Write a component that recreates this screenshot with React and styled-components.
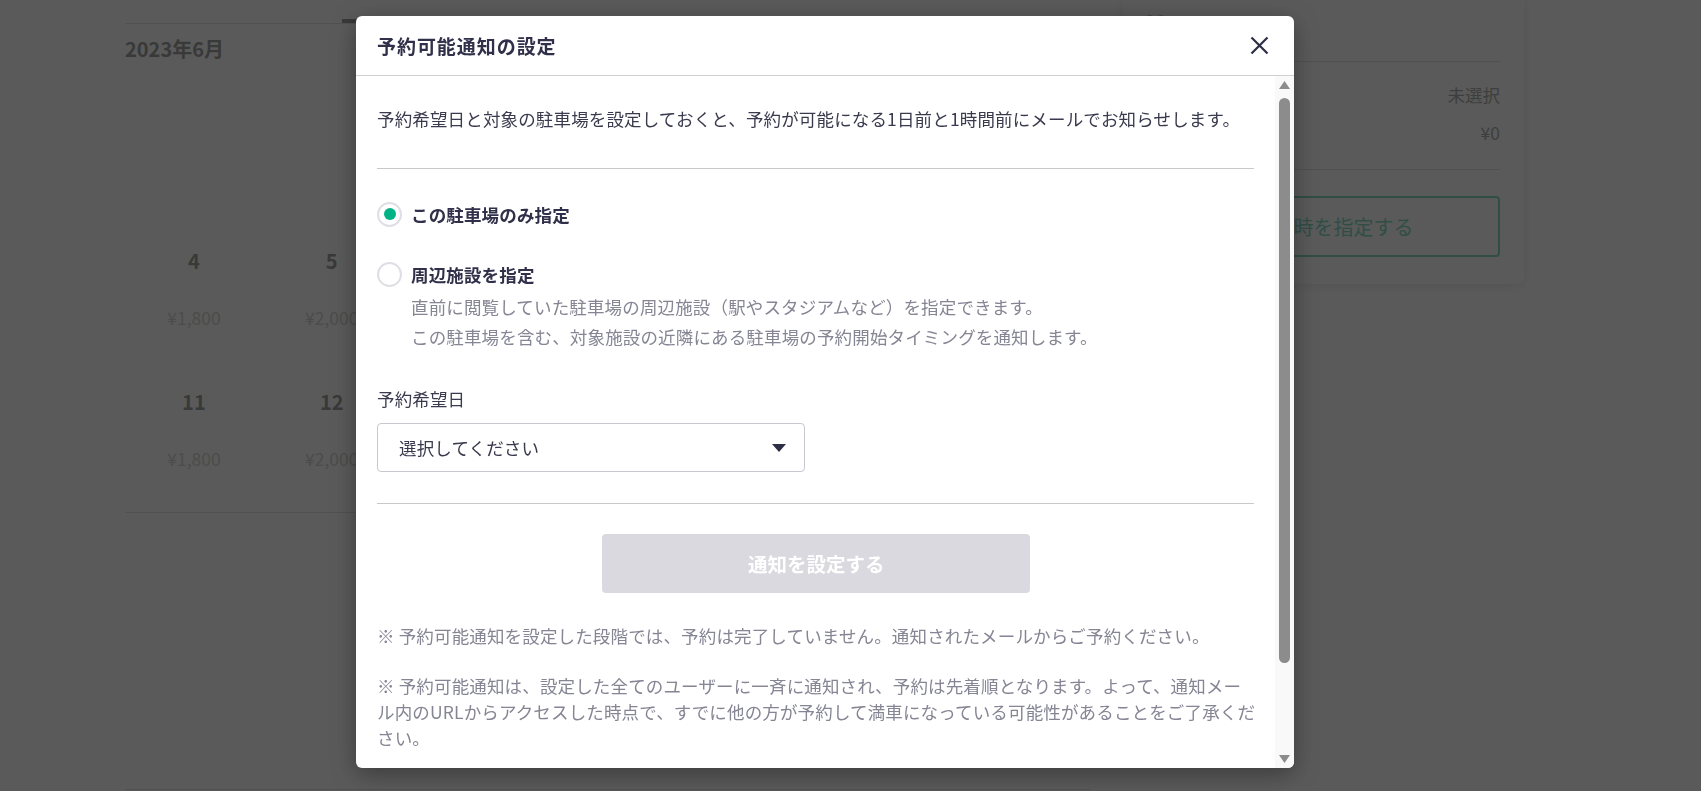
import React from "react";
import styled, { createGlobalStyle } from "styled-components";

const GlobalStyle = createGlobalStyle`
  html, body {
    margin: 0;
    padding: 0;
  }
  body {
    width: 1701px;
    height: 791px;
    overflow: hidden;
    background: #fff;
    font-family: "Noto Sans CJK JP", "Noto Sans", sans-serif;
    color: #333;
  }
  * { box-sizing: border-box; }
`;

/* ---------- page behind the overlay ---------- */

const Page = styled.div`
  width: 1701px;
  height: 791px;
  overflow: hidden;
  display: flex;
  align-items: flex-start;
  gap: 33px;
  padding-left: 125px;
`;

const CalendarCol = styled.section`
  width: 965px;
  flex: none;
`;

const TabBar = styled.div`
  height: 24px;
  display: flex;
  align-items: flex-end;
  border-bottom: 1px solid #c4c4c4;
`;

const ActiveTab = styled.div`
  margin-left: 217px;
  width: 260px;
  height: 4px;
  background: #333;
`;

const Month = styled.h2`
  margin: 10px 0 0;
  font-size: 20px;
  line-height: 30px;
  font-weight: 700;
  color: #333;
`;

const Grid = styled.div`
  margin-top: 29px;
  display: grid;
  grid-template-columns: repeat(7, 1fr);
  border-bottom: 1px solid #c4c4c4;
`;

const Cell = styled.div`
  height: ${(p) => (p.$tall ? 141 : 139)}px;
  padding-top: ${(p) => (p.$tall ? 16 : 14)}px;
  display: flex;
  flex-direction: column;
  align-items: center;
`;

const DayNum = styled.div`
  font-size: 20px;
  font-weight: 700;
  line-height: 30px;
  color: #333;
`;

const DayPrice = styled.div`
  margin-top: 29px;
  font-size: 17.5px;
  line-height: 26px;
  color: #a8a8a8;
`;

const NextSection = styled.div`
  height: 277px;
  border-bottom: 1px solid #c4c4c4;
`;

const SideCard = styled.aside`
  width: 401px;
  flex: none;
  background: #fff;
  padding: 0 24px 27px;
  border-radius: 0 0 8px 8px;
  box-shadow: 0 2px 12px rgba(0, 0, 0, 0.18);
`;

const BigPrice = styled.div`
  padding: 4px 0 17px;
  font-size: 28px;
  line-height: 40px;
  font-weight: 700;
  border-bottom: 1px solid #c4c4c4;
`;

const SummaryList = styled.div`
  padding: 20px 0 23px;
  display: flex;
  flex-direction: column;
  gap: 12px;
  border-bottom: 1px solid #c4c4c4;
`;

const SummaryRow = styled.div`
  display: flex;
  justify-content: flex-end;
  font-size: 17.5px;
  line-height: 26px;
  color: #555;
`;

const OutlineButton = styled.button`
  margin-top: 26px;
  width: 100%;
  height: 61px;
  border: 2px solid #00b386;
  border-radius: 4px;
  background: #fff;
  color: #00b386;
  font-family: inherit;
  font-size: 20px;
`;

/* ---------- modal ---------- */

const Overlay = styled.div`
  position: fixed;
  inset: 0;
  background: rgba(57, 58, 57, 0.84);
  padding: 16px 0 0 356px;
  display: flex;
  align-items: flex-start;
`;

const Modal = styled.div`
  width: 938px;
  height: 752px;
  background: #fff;
  border-radius: 6px;
  overflow: hidden;
  display: flex;
  flex-direction: column;
  box-shadow: 0 6px 24px rgba(0, 0, 0, 0.35);
`;

const Header = styled.header`
  height: 60px;
  flex: none;
  padding: 0 25px 0 21px;
  display: flex;
  align-items: center;
  justify-content: space-between;
  border-bottom: 1px solid #cfcfd4;
`;

const Title = styled.h1`
  margin: 0;
  font-size: 19px;
  letter-spacing: 0.05em;
  font-weight: 700;
  color: #30304a;
`;

const CloseButton = styled.button`
  width: 19px;
  height: 19px;
  padding: 0;
  border: none;
  background: none;
  display: flex;
  cursor: pointer;
`;

const Body = styled.div`
  flex: 1;
  min-height: 0;
  display: flex;
`;

const Content = styled.div`
  flex: 1;
  min-width: 0;
  overflow: hidden;
  padding: 28px 19.5px 0 21px;
  letter-spacing: 0.15px;
`;

const ScrollBar = styled.div`
  width: 19px;
  flex: none;
  background: #f9f9f9;
  display: flex;
  flex-direction: column;
`;

const ScrollArrow = styled.div`
  height: 18px;
  flex: none;
  display: flex;
  align-items: center;
  justify-content: center;
`;

const ScrollTrack = styled.div`
  flex: 1;
  padding: 4px;
`;

const ScrollThumb = styled.div`
  height: 565px;
  border-radius: 6px;
  background: #8c8c8c;
`;

const Lead = styled.p`
  margin: 0;
  font-size: 17.5px;
  line-height: 30px;
  color: #3a3a4e;
`;

const Divider = styled.hr`
  margin: ${(p) => p.$top}px 1.5px 0 0;
  border: none;
  border-top: 1px solid #c8c8cc;
`;

const OptionList = styled.div`
  margin-top: 30px;
  display: flex;
  flex-direction: column;
  gap: 30px;
`;

const Option = styled.div`
  display: flex;
  flex-direction: column;
`;

const OptionHead = styled.label`
  display: flex;
  align-items: center;
  gap: 9px;
  height: 30px;
  font-size: 17.5px;
  font-weight: 700;
  color: #30304a;
  cursor: pointer;
`;

const RadioMark = styled.span`
  width: 25px;
  height: 25px;
  flex: none;
  border-radius: 50%;
  border: 2px solid #dedee4;
  display: flex;
  align-items: center;
  justify-content: center;

  &::after {
    content: "";
    width: 12px;
    height: 12px;
    border-radius: 50%;
    background: ${(p) => (p.$checked ? "#00b386" : "transparent")};
  }
`;

const OptionNote = styled.div`
  margin-top: 3px;
  padding-left: 34px;
  font-size: 17.5px;
  line-height: 30px;
  color: #858594;
`;

const FieldLabel = styled.div`
  margin-top: 32px;
  font-size: 17.5px;
  line-height: 30px;
  color: #3a3a4e;
`;

const SelectBox = styled.div`
  margin-top: 9px;
  width: 428px;
  height: 49px;
  padding: 0 18px 0 21px;
  border: 1px solid #c8c8d0;
  border-radius: 4px;
  display: flex;
  align-items: center;
  justify-content: space-between;
  font-size: 17.5px;
  color: #3a3a4e;
`;

const SubmitButton = styled.button`
  display: block;
  margin: 30px auto 0;
  width: 428px;
  height: 59px;
  border: none;
  border-radius: 4px;
  background: #d9d9df;
  color: #fff;
  font-family: inherit;
  font-size: 19.5px;
  font-weight: 700;
`;

const Caution = styled.p`
  margin: ${(p) => p.$top}px 0 0;
  font-size: 17.5px;
  line-height: 26px;
  color: #858594;
`;

/* only the two left columns are visible outside the modal */
const weeks = [
  [null, null],
  [
    [4, "¥1,800"],
    [5, "¥2,000"],
  ],
  [
    [11, "¥1,800"],
    [12, "¥2,000"],
  ],
];

const Arrow = ({ up }) => (
  <svg width="11" height="8" viewBox="0 0 11 8">
    <path d={up ? "M0 8 L5.5 0 L11 8 Z" : "M0 0 L11 0 L5.5 8 Z"} fill="#8c8c8c" />
  </svg>
);

export default function App() {
  return (
    <>
      <GlobalStyle />
      <Page>
        <CalendarCol>
          <TabBar>
            <ActiveTab />
          </TabBar>
          <Month>2023年6月</Month>
          <Grid>
            {weeks.flatMap((week, w) =>
              Array.from({ length: 7 }, (_, i) => {
                const day = week[i];
                return (
                  <Cell key={`${w}-${i}`} $tall={w === 2}>
                    {day && (
                      <>
                        <DayNum>{day[0]}</DayNum>
                        <DayPrice>{day[1]}</DayPrice>
                      </>
                    )}
                  </Cell>
                );
              })
            )}
          </Grid>
          <NextSection />
        </CalendarCol>

        <SideCard>
          <BigPrice>¥2,000</BigPrice>
          <SummaryList>
            <SummaryRow>未選択</SummaryRow>
            <SummaryRow>¥0</SummaryRow>
          </SummaryList>
          <OutlineButton>利用日時を指定する</OutlineButton>
        </SideCard>
      </Page>

      <Overlay>
        <Modal>
          <Header>
            <Title>予約可能通知の設定</Title>
            <CloseButton aria-label="閉じる">
              <svg width="19" height="19" viewBox="0 0 19 19">
                <path d="M1.5 1.5 L17.5 17.5 M17.5 1.5 L1.5 17.5" stroke="#2d2d45" strokeWidth="2.2" fill="none" />
              </svg>
            </CloseButton>
          </Header>

          <Body>
            <Content>
              <Lead>
                予約希望日と対象の駐車場を設定しておくと、予約が可能になる1日前と1時間前にメールでお知らせします。
              </Lead>
              <Divider $top={34} />

              <OptionList>
                <Option>
                  <OptionHead>
                    <RadioMark $checked />
                    この駐車場のみ指定
                  </OptionHead>
                </Option>
                <Option>
                  <OptionHead>
                    <RadioMark />
                    周辺施設を指定
                  </OptionHead>
                  <OptionNote>
                    直前に閲覧していた駐車場の周辺施設（駅やスタジアムなど）を指定できます。
                    <br />
                    この駐車場を含む、対象施設の近隣にある駐車場の予約開始タイミングを通知します。
                  </OptionNote>
                </Option>
              </OptionList>

              <FieldLabel>予約希望日</FieldLabel>
              <SelectBox>
                <span>選択してください</span>
                <svg width="14" height="8" viewBox="0 0 14 8">
                  <path d="M0 0 H14 L7 8 Z" fill="#2d2d45" />
                </svg>
              </SelectBox>
              <Divider $top={31} />

              <SubmitButton disabled>通知を設定する</SubmitButton>

              <Caution $top={30}>
                ※ 予約可能通知を設定した段階では、予約は完了していません。通知されたメールからご予約ください。
              </Caution>
              <Caution $top={24}>
                ※ 予約可能通知は、設定した全てのユーザーに一斉に通知され、予約は先着順となります。よって、通知メール内のURLからアクセスした時点で、すでに他の方が予約して満車になっている可能性があることをご了承ください。
              </Caution>
            </Content>

            <ScrollBar>
              <ScrollArrow>
                <Arrow up />
              </ScrollArrow>
              <ScrollTrack>
                <ScrollThumb />
              </ScrollTrack>
              <ScrollArrow>
                <Arrow />
              </ScrollArrow>
            </ScrollBar>
          </Body>
        </Modal>
      </Overlay>
    </>
  );
}
